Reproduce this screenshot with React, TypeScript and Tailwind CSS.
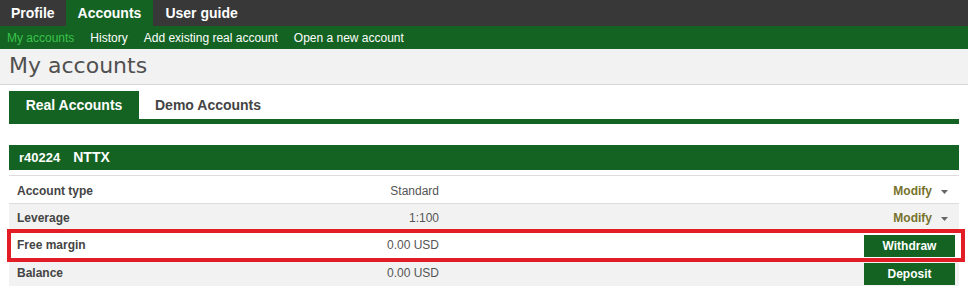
const GREEN = 'bg-[#146322]';

const Caret = () => (
  <svg width="7" height="4" viewBox="0 0 7 4" className="ml-[9px] mt-[2px]">
    <path d="M0 0h7L3.5 4z" fill="#666" />
  </svg>
);

const Row = ({
  label,
  value,
  shaded,
  action,
  className = '',
  children,
}: {
  label: string;
  value: string;
  shaded?: boolean;
  action?: React.ReactNode;
  className?: string;
  children?: React.ReactNode;
}) => (
  <div className={`relative flex items-center ${shaded ? 'bg-[#f2f2f2]' : 'bg-white'} ${className}`}>
    <div className="w-[400px] pl-[8px] pt-[2px] font-bold text-[12px] text-[#444]">{label}</div>
    <div className="w-[30px] pt-[2px] text-right text-[12px] text-[#555] whitespace-nowrap flex justify-end">{value}</div>
    <div className="flex-1 flex justify-end pr-[4px] self-stretch">{action}</div>
    {children}
  </div>
);

const Modify = () => (
  <div className="flex items-center pt-[2px] pr-[7px] text-[12px] font-bold text-[#77722c]">
    Modify
    <Caret />
  </div>
);

const GreenButton = ({ label }: { label: string }) => (
  <div className={`mt-[5px] mb-[1px] w-[91px] h-[22px] ${GREEN} flex items-center justify-center text-white text-[12px] font-bold`}>
    {label}
  </div>
);

export default function App() {
  return (
    <div className="w-[968px] h-[293px] bg-white overflow-hidden font-['Liberation_Sans',Arial,sans-serif]">
      {/* Top nav */}
      <div className="h-[26px] bg-[#383838] flex text-white font-bold text-[14px]">
        <div className="px-[11px] flex items-center">Profile</div>
        <div className={`px-[12px] flex items-center ${GREEN}`}>Accounts</div>
        <div className="px-[12px] flex items-center">User guide</div>
      </div>

      {/* Sub nav */}
      <div className={`h-[23px] ${GREEN} flex items-center gap-[16px] pl-[7px] text-[12px] text-white`}>
        <span className="text-[#3bc24c]">My accounts</span>
        <span>History</span>
        <span>Add existing real account</span>
        <span>Open a new account</span>
      </div>

      {/* Title */}
      <div className="h-[36px] bg-[#f2f2f2] border-b border-[#d4d4d4] flex items-center pl-[9px]">
        <h1 className="font-['DejaVu_Sans',Verdana,sans-serif] text-[22px] leading-none text-[#505050] -mt-[2px]">My accounts</h1>
      </div>

      <div className="px-[9px]">
        {/* Tabs */}
        <div className="mt-[6px] flex h-[28px] text-[14px] font-bold">
          <div className={`w-[130px] ${GREEN} text-white flex items-center justify-center`}>Real Accounts</div>
          <div className="px-[16px] text-[#444] flex items-center">Demo Accounts</div>
        </div>
        <div className={`h-[5px] ${GREEN}`} />

        {/* Account card */}
        <div className={`mt-[21px] h-[25px] ${GREEN} flex items-center pl-[10px] text-white font-bold gap-[13px]`}>
          <span className="text-[13px]">r40224</span>
          <span className="text-[14px]">NTTX</span>
        </div>

        <div className="mt-[5px] border-t border-[#ddd]">
          <Row label="Account type" value="Standard" action={<Modify />} className="h-[28px] border-b border-[#ddd]" />
          <Row label="Leverage" value="1:100" shaded action={<Modify />} className="h-[26px]" />
          <Row label="Free margin" value="0.00 USD" action={<GreenButton label="Withdraw" />} className="h-[28px] z-10">
            <div className="absolute -left-[2px] -right-[6px] -top-[1px] -bottom-[4px] border-[4px] border-[#e31d25] pointer-events-none" />
          </Row>
          <Row label="Balance" value="0.00 USD" shaded action={<GreenButton label="Deposit" />} className="h-[28px]" />
        </div>
      </div>
    </div>
  );
}
